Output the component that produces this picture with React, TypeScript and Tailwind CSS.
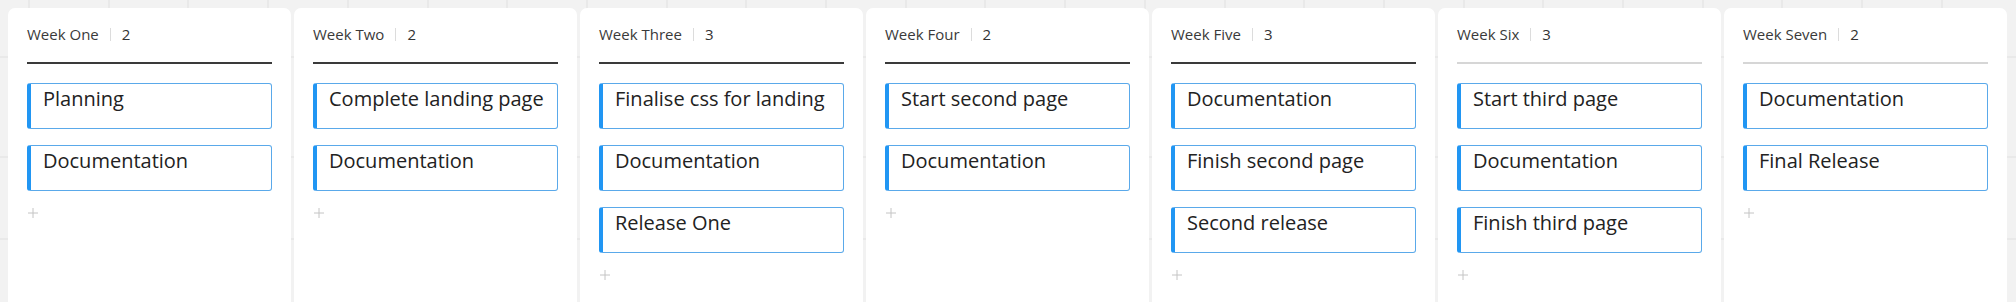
type Week = {
  title: string;
  tasks: string[];
  muted?: boolean;
};

const weeks: Week[] = [
  { title: "Week One", tasks: ["Planning", "Documentation"] },
  { title: "Week Two", tasks: ["Complete landing page", "Documentation"] },
  {
    title: "Week Three",
    tasks: ["Finalise css for landing", "Documentation", "Release One"],
  },
  { title: "Week Four", tasks: ["Start second page", "Documentation"] },
  {
    title: "Week Five",
    tasks: ["Documentation", "Finish second page", "Second release"],
  },
  {
    title: "Week Six",
    tasks: ["Start third page", "Documentation", "Finish third page"],
    muted: true,
  },
  { title: "Week Seven", tasks: ["Documentation", "Final Release"], muted: true },
];

function TaskCard({ label }: { label: string }) {
  return (
    <div className="h-[46px] rounded-[3px] border border-l-4 border-[#5aa9ea] border-l-[#2196f3] bg-white pl-3 pt-[2px]">
      <span className="block text-[20px] leading-[26px] text-[#222]">
        {label}
      </span>
    </div>
  );
}

function WeekColumn({ week }: { week: Week }) {
  return (
    <div className="h-[320px] w-[283px] shrink-0 rounded-[7px] bg-white px-[19px] pt-4">
      <div className="flex h-5 items-center text-[15px] leading-5 text-[#3a3a3a]">
        <span>{week.title}</span>
        <span className="mx-[11px] h-[13px] w-px bg-[#dcdcdc]" />
        <span className="text-[#333]">{week.tasks.length}</span>
      </div>
      <div
        className={
          week.muted
            ? "mt-[18px] h-[2px] bg-[#d6d6d6]"
            : "mt-[18px] h-[2px] bg-[#3a3a3a]"
        }
      />
      <div className="mt-[19px] flex flex-col gap-4">
        {week.tasks.map((t, i) => (
          <TaskCard key={i} label={t} />
        ))}
      </div>
      <div className="mt-[17px] pl-px">
        <svg width="10" height="10" viewBox="0 0 10 10" className="block">
          <path d="M5 0v10M0 5h10" stroke="#c4c4c4" strokeWidth="1" />
        </svg>
      </div>
    </div>
  );
}

export default function App() {
  return (
    <div
      className="flex h-[302px] w-[2016px] gap-[3px] overflow-hidden bg-[#f2f2f2] bg-[image:repeating-linear-gradient(90deg,transparent_0,transparent_28px,#e9e9e9_28px,#e9e9e9_30px,transparent_30px,transparent_79.7px),linear-gradient(180deg,transparent_56px,#e9e9e9_56px,#e9e9e9_58px,transparent_58px,transparent_156px,#e9e9e9_156px,#e9e9e9_158px,transparent_158px,transparent_238px,#e9e9e9_238px,#e9e9e9_240px,transparent_240px)] pl-2 pt-2 font-['Open_Sans',sans-serif]"
    >
      {weeks.map((w) => (
        <WeekColumn key={w.title} week={w} />
      ))}
    </div>
  );
}
